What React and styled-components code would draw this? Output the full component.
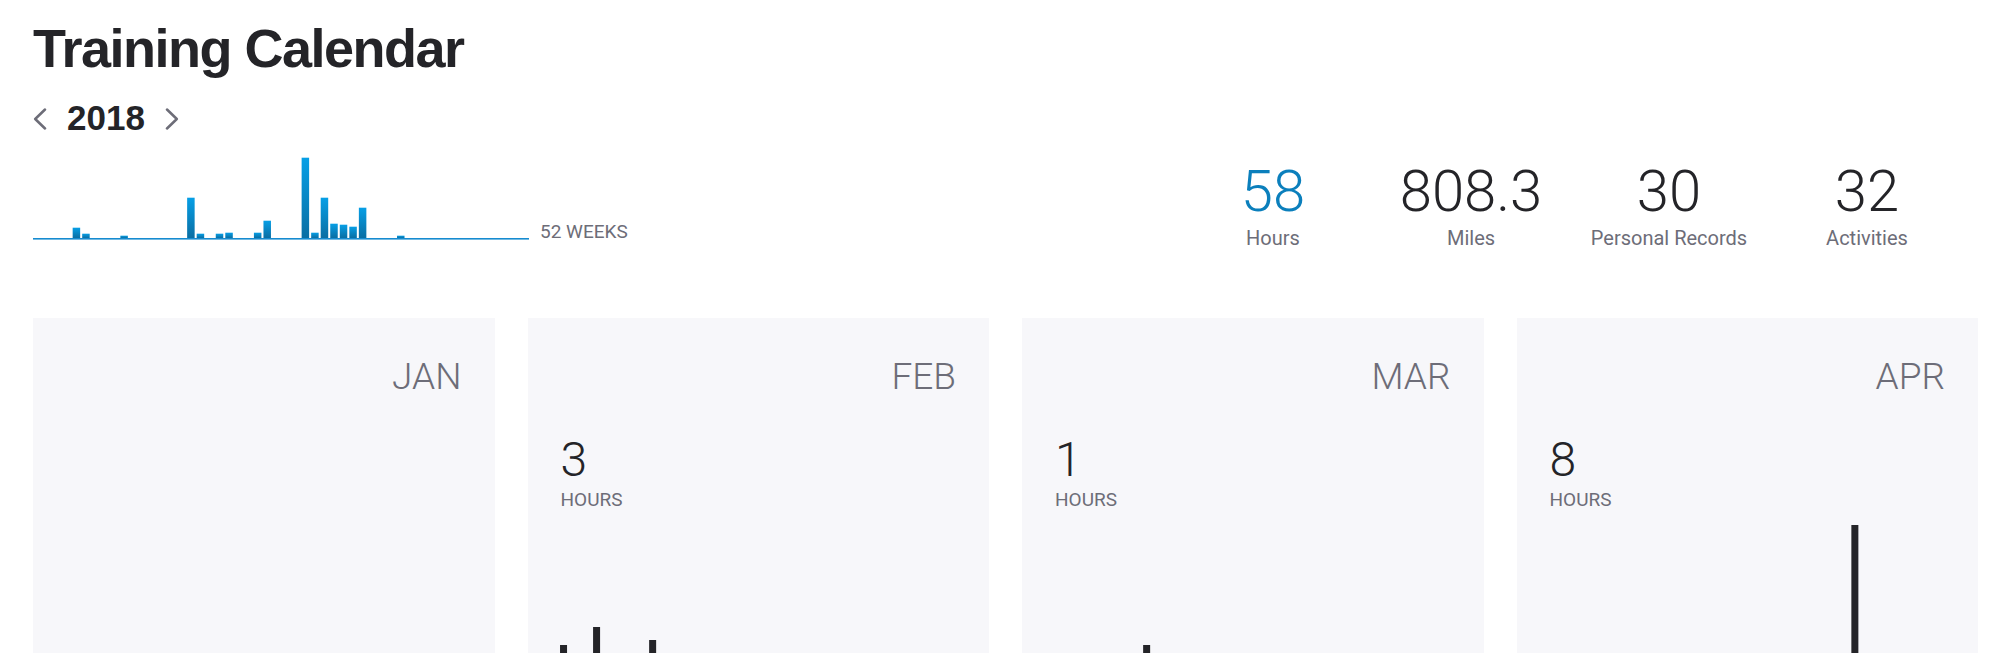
import styled, { createGlobalStyle } from "styled-components";

const GlobalStyle = createGlobalStyle`
  html, body {
    margin: 0;
    padding: 0;
    background: #ffffff;
  }
  body {
    font-family: Roboto, "Liberation Sans", sans-serif;
    color: #242428;
  }
`;

const WEEKS = [
  [4, 10.3], [5, 4.3], [9, 2.3], [16, 40.3], [17, 4.3], [19, 4.3], [20, 5.3],
  [23, 5.3], [24, 17.3], [28, 80.3], [29, 5.3], [30, 40.3], [31, 14.3],
  [32, 13.3], [33, 11.3], [34, 30.3], [38, 2.3],
];

const STATS = [
  { value: "58", label: "Hours", accent: true },
  { value: "808.3", label: "Miles" },
  { value: "30", label: "Personal Records" },
  { value: "32", label: "Activities" },
];

const MONTHS = [
  { name: "JAN" },
  { name: "FEB", hours: 3, bars: [[32, 8], [65, 26], [121, 13]] },
  { name: "MAR", hours: 1, bars: [[121, 8]] },
  { name: "APR", hours: 8, bars: [[334, 128]] },
];

const Chevron = ({ dir }) => (
  <svg width="14" height="22" viewBox="0 0 14 22" fill="none">
    <path
      d={dir === "left" ? "M12 1.5 L2.2 11 L12 20.5" : "M2 1.5 L11.8 11 L2 20.5"}
      stroke="#6d6d78"
      strokeWidth="2.5"
      strokeLinecap="round"
      strokeLinejoin="round"
    />
  </svg>
);

const WeekChart = () => (
  <svg width="496" height="84" viewBox="0 0 496 84" style={{ display: "block" }}>
    <defs>
      <linearGradient id="weekBar" x1="0" y1="0" x2="0" y2="1">
        <stop offset="0%" stopColor="#069fe6" />
        <stop offset="100%" stopColor="#0a6ea3" />
      </linearGradient>
    </defs>
    {WEEKS.map(([w, h]) => (
      <rect key={w} x={w * 9.54 + 1.5} y={81 - h} width="7.5" height={h} fill="url(#weekBar)" />
    ))}
    <rect x="0" y="81" width="496" height="1.6" fill="#168bd0" />
  </svg>
);

const DayChart = ({ bars = [] }) => (
  <DaySvg viewBox="0 0 461 140" preserveAspectRatio="none">
    {bars.map(([x, h]) => (
      <rect key={x} x={x} y={140 - h} width="7" height={h} fill="#242428" />
    ))}
  </DaySvg>
);

export default function App() {
  return (
    <Page>
      <GlobalStyle />
      <Title>Training Calendar</Title>
      <YearNav>
        <NavButton aria-label="previous year">
          <Chevron dir="left" />
        </NavButton>
        <Year>2018</Year>
        <NavButton aria-label="next year">
          <Chevron dir="right" />
        </NavButton>
      </YearNav>

      <Summary>
        <WeekBlock>
          <WeekChart />
          <WeekLabel>52 WEEKS</WeekLabel>
        </WeekBlock>
        <Stats>
          {STATS.map((s) => (
            <Stat key={s.label}>
              <StatValue $accent={s.accent}>{s.value}</StatValue>
              <StatLabel>{s.label}</StatLabel>
            </Stat>
          ))}
        </Stats>
      </Summary>

      <MonthGrid>
        {MONTHS.map((m) => (
          <MonthCard key={m.name}>
            <MonthName>{m.name}</MonthName>
            {m.hours !== undefined && (
              <>
                <MonthHours>{m.hours}</MonthHours>
                <MonthUnit>HOURS</MonthUnit>
              </>
            )}
            <DayChart bars={m.bars} />
          </MonthCard>
        ))}
      </MonthGrid>
    </Page>
  );
}

const Page = styled.div`
  padding: 21px 30px 0 33px;
  width: 2008px;
  box-sizing: border-box;
`;

const Title = styled.h1`
  margin: 0;
  font-family: "Liberation Sans", Arial, sans-serif;
  font-weight: 700;
  font-size: 54px;
  line-height: 1;
  letter-spacing: -1.5px;
  color: #242428;
`;

const YearNav = styled.div`
  display: flex;
  align-items: center;
  gap: 20px;
  margin-top: 25px;
  height: 35px;
`;

const NavButton = styled.button`
  display: flex;
  align-items: center;
  padding: 0;
  margin: 2px 0 0;
  border: 0;
  background: none;
  cursor: pointer;
`;

const Year = styled.span`
  font-family: "Liberation Sans", Arial, sans-serif;
  font-weight: 700;
  font-size: 35px;
  line-height: 1;
  color: #242428;
`;

const Summary = styled.div`
  display: flex;
  justify-content: space-between;
  align-items: flex-start;
  margin-top: 22px;
  height: 90px;
`;

const WeekBlock = styled.div`
  display: flex;
  align-items: flex-end;
  gap: 11px;
`;

const WeekLabel = styled.span`
  font-size: 19px;
  line-height: 1;
  color: #6d6d78;
`;

const Stats = styled.div`
  display: flex;
  margin-top: 5px;
  margin-right: 12px;
`;

const Stat = styled.div`
  width: 198px;
  display: flex;
  flex-direction: column;
  align-items: center;
  gap: 8px;
`;

const StatValue = styled.div`
  font-weight: 300;
  font-size: 58px;
  line-height: 1;
  color: ${(p) => (p.$accent ? "#0b7fbc" : "#242428")};
`;

const StatLabel = styled.div`
  font-size: 20px;
  line-height: 1;
  color: #6d6d78;
`;

const MonthGrid = styled.div`
  display: grid;
  grid-template-columns: repeat(4, 1fr);
  gap: 33px;
  margin-top: 71px;
`;

const MonthCard = styled.div`
  height: 335px;
  background: #f7f7fa;
  padding: 40px 33px 0 33px;
  box-sizing: border-box;
  display: flex;
  flex-direction: column;
  overflow: hidden;
`;

const MonthName = styled.div`
  align-self: flex-end;
  font-weight: 300;
  font-size: 37px;
  line-height: 1;
  color: #6d6d78;
`;

const MonthHours = styled.div`
  margin-top: 41px;
  font-weight: 300;
  font-size: 48px;
  line-height: 1;
  color: #242428;
`;

const MonthUnit = styled.div`
  margin-top: 6px;
  font-size: 19px;
  line-height: 1;
  color: #6d6d78;
`;

const DaySvg = styled.svg`
  display: block;
  margin: auto -33px 0;
  width: calc(100% + 66px);
  height: 140px;
  flex-shrink: 0;
`;
